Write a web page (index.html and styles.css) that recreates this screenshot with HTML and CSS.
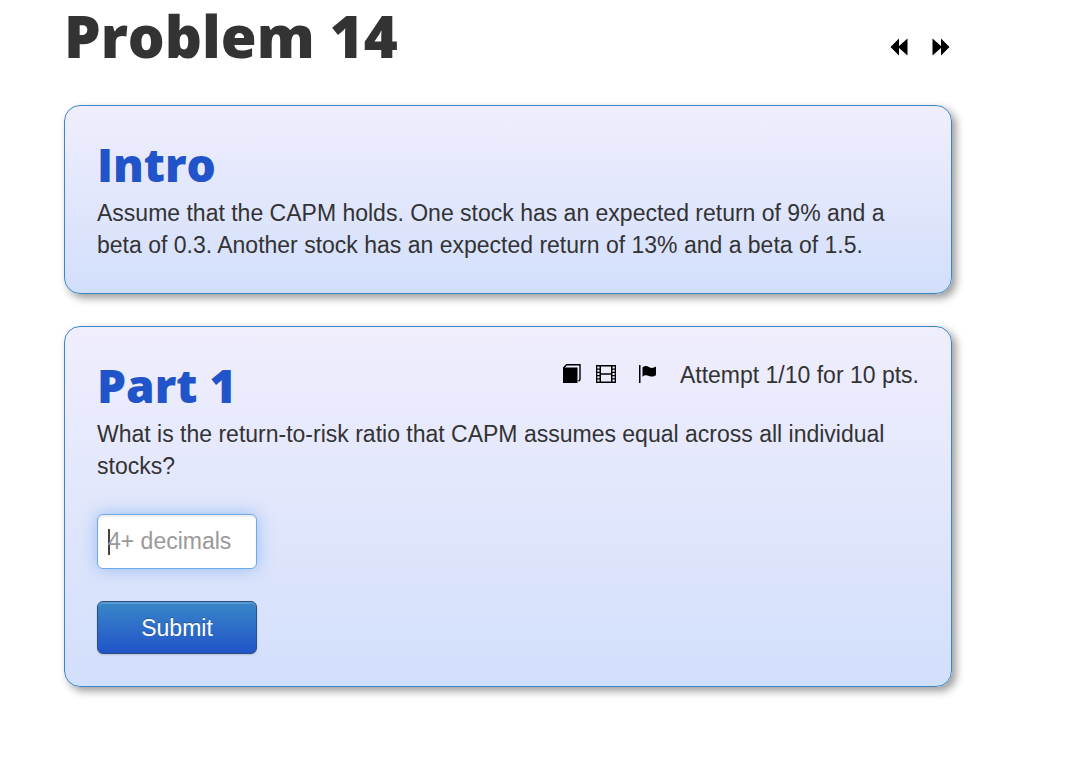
FILE: index.html
```html
<!DOCTYPE html>
<html lang="en">
<head>
    <meta charset="UTF-8">
    <meta name="viewport" content="width=device-width, initial-scale=1.0">
    <title>Problem 14</title>
    <link rel="stylesheet" href="styles.css">
</head>
<body>
    <div class="page">
        <header class="page-header">
            <h1>Problem 14</h1>
            <nav class="pager">
                <a href="#previous" aria-label="Previous problem">
                    <svg width="18" height="18" viewBox="0 0 18 18"><path d="M9 0.500v7.500l8.500-7.500v17l-8.500-7.500v7.500L0.500 9z"/></svg>
                </a>
                <a href="#next" aria-label="Next problem">
                    <svg width="18" height="18" viewBox="0 0 18 18"><path d="M9 0.500v7.500L0.500 0.500v17l8.500-7.500v7.500l8.500-8.500z"/></svg>
                </a>
            </nav>
        </header>

        <main>
            <section class="card">
                <h2>Intro</h2>
                <p>Assume that the CAPM holds. One stock has an expected return of 9% and a beta of 0.3. Another stock has an expected return of 13% and a beta of 1.5.</p>
            </section>

            <section class="card">
                <div class="card-header">
                    <h2>Part 1</h2>
                    <div class="tools">
                        <a href="#book" aria-label="Textbook">
                            <svg width="20" height="20" viewBox="0 0 20 20">
                                <path d="M1 3.500h14.500V19H1z"/>
                                <path d="M1.500 4l3-3.200h13.500v15l-1.500 1.500" fill="none" stroke="#000" stroke-width="1.400"/>
                            </svg>
                        </a>
                        <a href="#video" aria-label="Video">
                            <svg width="20" height="20" viewBox="0 0 20 20">
                                <path fill-rule="evenodd" d="M0 1h20v18H0zM5 2.500h10v6.700H5zM5 10.800h10v6.700H5zM1.300 2.500v2h2.200v-2zM1.300 5.800v2h2.200v-2zM1.300 9v2h2.200V9zM1.300 12.200v2h2.200v-2zM1.300 15.500v2h2.200v-2zM16.500 2.500v2h2.200v-2zM16.500 5.800v2h2.200v-2zM16.500 9v2h2.200V9zM16.500 12.200v2h2.200v-2zM16.500 15.500v2h2.200v-2z"/>
                            </svg>
                        </a>
                        <a class="flag" href="#flag" aria-label="Flag">
                            <svg width="20" height="20" viewBox="0 0 20 20">
                                <path d="M1 1h1.500v18H1zM4.500 3.500C6.500 1.500 8.500 1.500 11 3s4.500 1 7-.5V11c-2 1.800-4.500 2-7 1s-4.500-1-6.500.7z"/>
                            </svg>
                        </a>
                        <span class="attempt">Attempt 1/10 for 10 pts.</span>
                    </div>
                </div>
                <p id="question">What is the return-to-risk ratio that CAPM assumes equal across all individual stocks?</p>
                <form class="answer">
                    <input type="text" name="answer" placeholder="4+ decimals" aria-labelledby="question">
                    <button type="submit">Submit</button>
                </form>
            </section>
        </main>
    </div>
</body>
</html>
```
FILE: styles.css
```css
* {
    box-sizing: border-box;
}

body {
    margin: 0;
    font-family: "Liberation Sans", Arial, sans-serif;
    font-size: 23px;
    line-height: 32px;
    background: #fff;
    color: #333;
}

h1, h2, p {
    margin: 0;
}

h1, h2 {
    font-family: "Arial Black", "Open Sans", sans-serif;
    font-weight: 900;
}

h1 {
    font-size: 58px;
    line-height: 72px;
}

h2 {
    font-size: 46px;
    line-height: 52px;
    padding-bottom: 7px;
    color: #2154c8;
}

svg {
    display: block;
}

.page {
    padding: 0 116px 32px 64px;
}

.page-header {
    display: flex;
    justify-content: space-between;
    align-items: flex-end;
    margin-bottom: 33px;
}

.pager {
    display: flex;
    gap: 24px;
    padding: 0 2px 16px 0;
}

.card {
    margin-bottom: 32px;
    padding: 32px;
    border: 1px solid #3a87c8;
    border-radius: 16px;
    background: linear-gradient(to bottom, #f0eefd, #d2dffb);
    box-shadow: 4px 4px 8px rgba(0, 0, 0, 0.4);
}

.card-header {
    display: flex;
    justify-content: space-between;
    align-items: flex-start;
}

.tools {
    display: flex;
    gap: 14px;
    align-items: center;
}

.tools svg {
    margin-bottom: 2px;
}

.flag {
    margin: 0 8px;
}

.answer {
    display: flex;
    flex-direction: column;
    align-items: flex-start;
    gap: 32px;
    margin-top: 32px;
}

input, button {
    width: 160px;
    font: inherit;
    border-radius: 6px;
}

input {
    height: 55px;
    padding: 0 10px;
    border: 1px solid #6cabea;
    /* text cursor at the start of the field */
    background: linear-gradient(#444, #444) 10px center / 2px 26px no-repeat #fff;
    box-shadow: inset 0 2px 2px rgba(0, 0, 0, 0.08), 0 0 16px rgba(82, 150, 236, 0.5);
    color: #333;
    outline: none;
}

input::placeholder {
    color: #999;
    opacity: 1;
}

button {
    height: 53px;
    padding: 0;
    border: 1px solid #2c4f80;
    background: linear-gradient(to bottom, #3a87c8, #2154c8);
    box-shadow: inset 0 2px 0 rgba(255, 255, 255, 0.15), 0 1px 2px rgba(0, 0, 0, 0.15);
    color: #fff;
    text-shadow: 0 -1px 0 rgba(0, 0, 0, 0.25);
    cursor: pointer;
}
```
